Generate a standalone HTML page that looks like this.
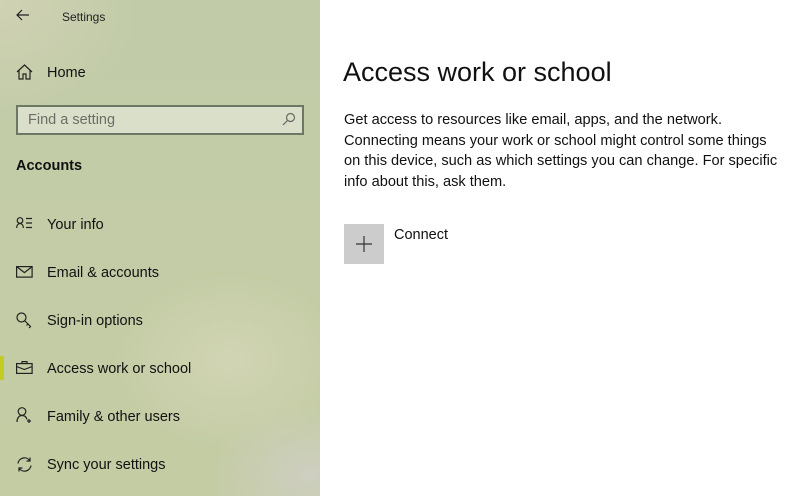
<!DOCTYPE html>
<html><head><meta charset="utf-8"><style>
*{margin:0;padding:0;box-sizing:border-box}
body{width:800px;height:496px;overflow:hidden;font-family:"Liberation Sans",sans-serif;color:#000;background:#fff;position:relative}
#side{position:absolute;left:0;top:0;width:320px;height:496px;
background:radial-gradient(ellipse 120px 90px at 230px 360px,rgba(215,216,185,.7),transparent),
radial-gradient(ellipse 140px 120px at 0px 0px,rgba(212,212,182,.8),transparent),
radial-gradient(ellipse 100px 70px at 310px 475px,rgba(210,208,205,.7),transparent),
linear-gradient(180deg,#c1cba8 0%,#c3cca6 50%,#c4cca4 100%)}
.t{position:absolute;white-space:nowrap}
.nav{position:absolute;left:47px;font-size:14.5px;color:#111;white-space:nowrap}
svg.i{position:absolute;left:16px;fill:none;stroke:#222;stroke-width:1.2}
p{font-size:14.6px;line-height:20.5px;color:#111}
</style></head><body>
<div id="side">
<svg class="i" style="top:9px;width:14px;height:12px" viewBox="0 0 14 12"><path d="M13 6H1M6 1L1 6l5 5"/></svg>
<div class="t" style="left:62px;top:10px;font-size:12px;color:#222">Settings</div>
<svg class="i" style="top:64px;width:17px;height:16px" viewBox="0 0 17 16"><path d="M1 8L8.5 1 16 8M3 6.5V15h4v-5h3v5h4V6.5"/></svg>
<div class="nav" style="top:65px">Home</div>
<div style="position:absolute;left:16px;top:105px;width:288px;height:30px;border:2px solid #6e7664;background:rgba(225,230,212,.75)"></div>
<div class="t" style="left:28px;top:112px;font-size:14.5px;color:#6a6e66">Find a setting</div>
<svg class="i" style="left:282px;top:112px;width:14px;height:14px;stroke:#666" viewBox="0 0 14 14"><circle cx="8.5" cy="5.5" r="4"/><path d="M5.5 8.5L1 13"/></svg>
<div class="t" style="left:16px;top:158px;font-size:14.5px;font-weight:bold;color:#111">Accounts</div>
<svg class="i" style="top:217px;width:17px;height:12px" viewBox="0 0 17 12"><circle cx="4" cy="3.5" r="2.8"/><path d="M0.7 11c0-3 1.5-4.5 3.3-4.5S7.3 8 7.3 11M10 1.5h6M10 6h6M10 10.5h6"/></svg>
<div class="nav" style="top:217px">Your info</div>
<svg class="i" style="top:266px;width:17px;height:12px" viewBox="0 0 17 12"><rect x=".6" y=".6" width="15.5" height="10.5"/><path d="M.6 .6l7.8 6 7.7-6"/></svg>
<div class="nav" style="top:265px">Email &amp; accounts</div>
<svg class="i" style="top:312px;width:17px;height:17px" viewBox="0 0 17 17"><circle cx="5.5" cy="5.5" r="4.5"/><path d="M8.5 8.5l6 6-1.5 1.5M12 12l-1.5 1.5"/></svg>
<div class="nav" style="top:313px">Sign-in options</div>
<div style="position:absolute;left:0;top:356px;width:4px;height:24px;background:#c4cc22"></div>
<svg class="i" style="top:361px;width:17px;height:13px" viewBox="0 0 17 13"><rect x=".6" y="2.6" width="15.5" height="9.8"/><path d="M6 2.6V.6h5v2M.6 5.5l7.8 3 7.7-3"/></svg>
<div class="nav" style="top:361px">Access work or school</div>
<svg class="i" style="top:407px;width:17px;height:17px" viewBox="0 0 17 17"><circle cx="6" cy="4.5" r="3.8"/><path d="M1 15c0-4 2-6.5 5-6.5s4.5 2 5 4M13 12v4M11 14h4"/></svg>
<div class="nav" style="top:409px">Family &amp; other users</div>
<svg class="i" style="top:456px;width:17px;height:17px" viewBox="0 0 17 17"><path d="M2 7.5A6.5 6.5 0 0 1 14 5M15 9.5A6.5 6.5 0 0 1 3 12M14 1.5V5h-3.5M3 15.5V12h3.5"/></svg>
<div class="nav" style="top:457px">Sync your settings</div>
</div>
<div class="t" style="left:343px;top:57px;font-size:27px;font-weight:300;color:#111">Access work or school</div>
<p style="position:absolute;left:344px;top:110px;width:440px">Get access to resources like email, apps, and the network.<br>Connecting means your work or school might control some things<br>on this device, such as which settings you can change. For specific<br>info about this, ask them.</p>
<div style="position:absolute;left:344px;top:224px;width:40px;height:40px;background:#cccccc"></div>
<svg style="position:absolute;left:355px;top:235px" width="18" height="18" viewBox="0 0 18 18"><path d="M9 1v16M1 9h16" stroke="#333" stroke-width="1.2"/></svg>
<div class="t" style="left:394px;top:227px;font-size:14.5px;color:#111">Connect</div>
</body></html>
